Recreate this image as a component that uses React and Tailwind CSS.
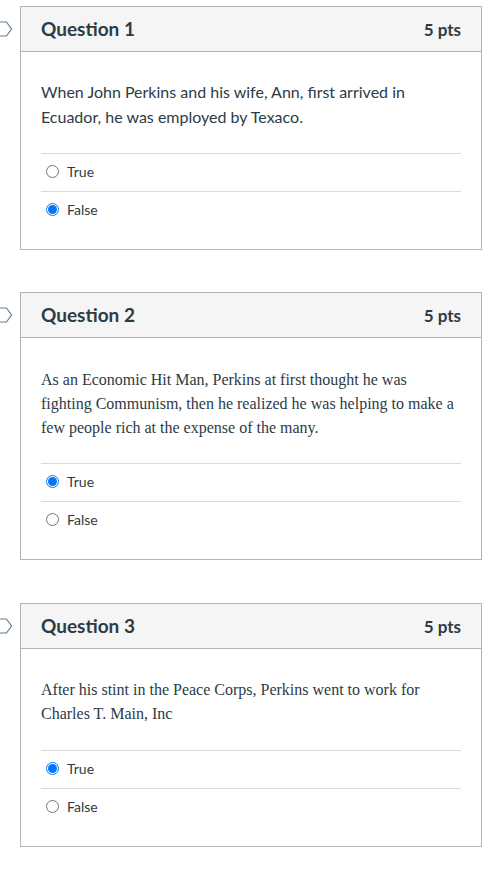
import React from "react";

const questions = [
  {
    n: 1,
    text: "When John Perkins and his wife, Ann, first arrived in Ecuador, he was employed by Texaco.",
    serif: false,
    answer: "False",
    wrap: "",
    body: "px-5 pt-[27px] pb-[20px]",
    gap: "mt-[24px]",
  },
  {
    n: 2,
    text: "As an Economic Hit Man, Perkins at first thought he was fighting Communism, then he realized he was helping to make a few people rich at the expense of the many.",
    serif: true,
    answer: "True",
    wrap: "mt-[42px]",
    body: "px-5 pt-[30px] pb-[20px]",
    gap: "mt-[23px]",
  },
  {
    n: 3,
    text: "After his stint in the Peace Corps, Perkins went to work for Charles T. Main, Inc",
    serif: true,
    answer: "True",
    wrap: "mt-[43px]",
    body: "px-5 pt-[29px] pb-[20px]",
    gap: "mt-[24px]",
  },
];

function Flag() {
  return (
    <svg className="absolute left-0 top-1/2 -translate-y-1/2" width="13" height="17" viewBox="0 0 13 17">
      <path d="M-5 1.5 H6.5 L11.5 8.5 L6.5 15.5 H-5 Z" fill="none" stroke="#5b7d9c" strokeWidth="1.2" />
    </svg>
  );
}

function Radio({ checked }) {
  return checked ? (
    <span className="w-[13px] h-[13px] rounded-full border border-[#0075ff] flex items-center justify-center">
      <span className="w-[9px] h-[9px] rounded-full bg-[#0075ff]" />
    </span>
  ) : (
    <span className="w-[13px] h-[13px] rounded-full border border-[#767676] bg-white" />
  );
}

function Question({ q }) {
  return (
    <div className={"relative " + q.wrap}>
      <div className="absolute left-0 top-0 h-[45px] w-[20px]">
        <Flag />
      </div>
      <div className="ml-[20px] w-[462px] border border-[#b3b3b3] bg-white">
        <div className="h-[45px] bg-[#f5f5f5] border-b border-[#b3b3b3] pl-5 pr-5 flex items-center justify-between">
          <span className="text-[19px] font-bold text-[#2d3b45]">Question {q.n}</span>
          <span className="text-[17px] font-bold text-[#2d3b45] pt-[2px]">5 pts</span>
        </div>
        <div className={q.body}>
          {q.serif ? (
            <p className="text-[16px] leading-[24px] text-[#2d3b45] pr-[6px]" style={{ fontFamily: '"Liberation Serif", "Times New Roman", serif' }}>
              {q.text}
            </p>
          ) : (
            <p className="text-[16px] leading-[25px] text-[#2d3b45]">{q.text}</p>
          )}
          <div className={q.gap}>
            {["True", "False"].map((a) => (
              <div key={a} className="h-[38px] border-t border-[#dadada] flex items-center pl-[5px] pb-[3px]">
                <Radio checked={a === q.answer} />
                <span className="ml-[8px] text-[14px] text-[#2d3b45]">{a}</span>
              </div>
            ))}
          </div>
        </div>
      </div>
    </div>
  );
}

export default function App() {
  return (
    <div className="w-[504px] min-h-[869px] bg-white pt-[6px] flex flex-col" style={{ fontFamily: 'Lato, "Liberation Sans", sans-serif' }}>
      {questions.map((q) => (
        <Question key={q.n} q={q} />
      ))}
    </div>
  );
}
